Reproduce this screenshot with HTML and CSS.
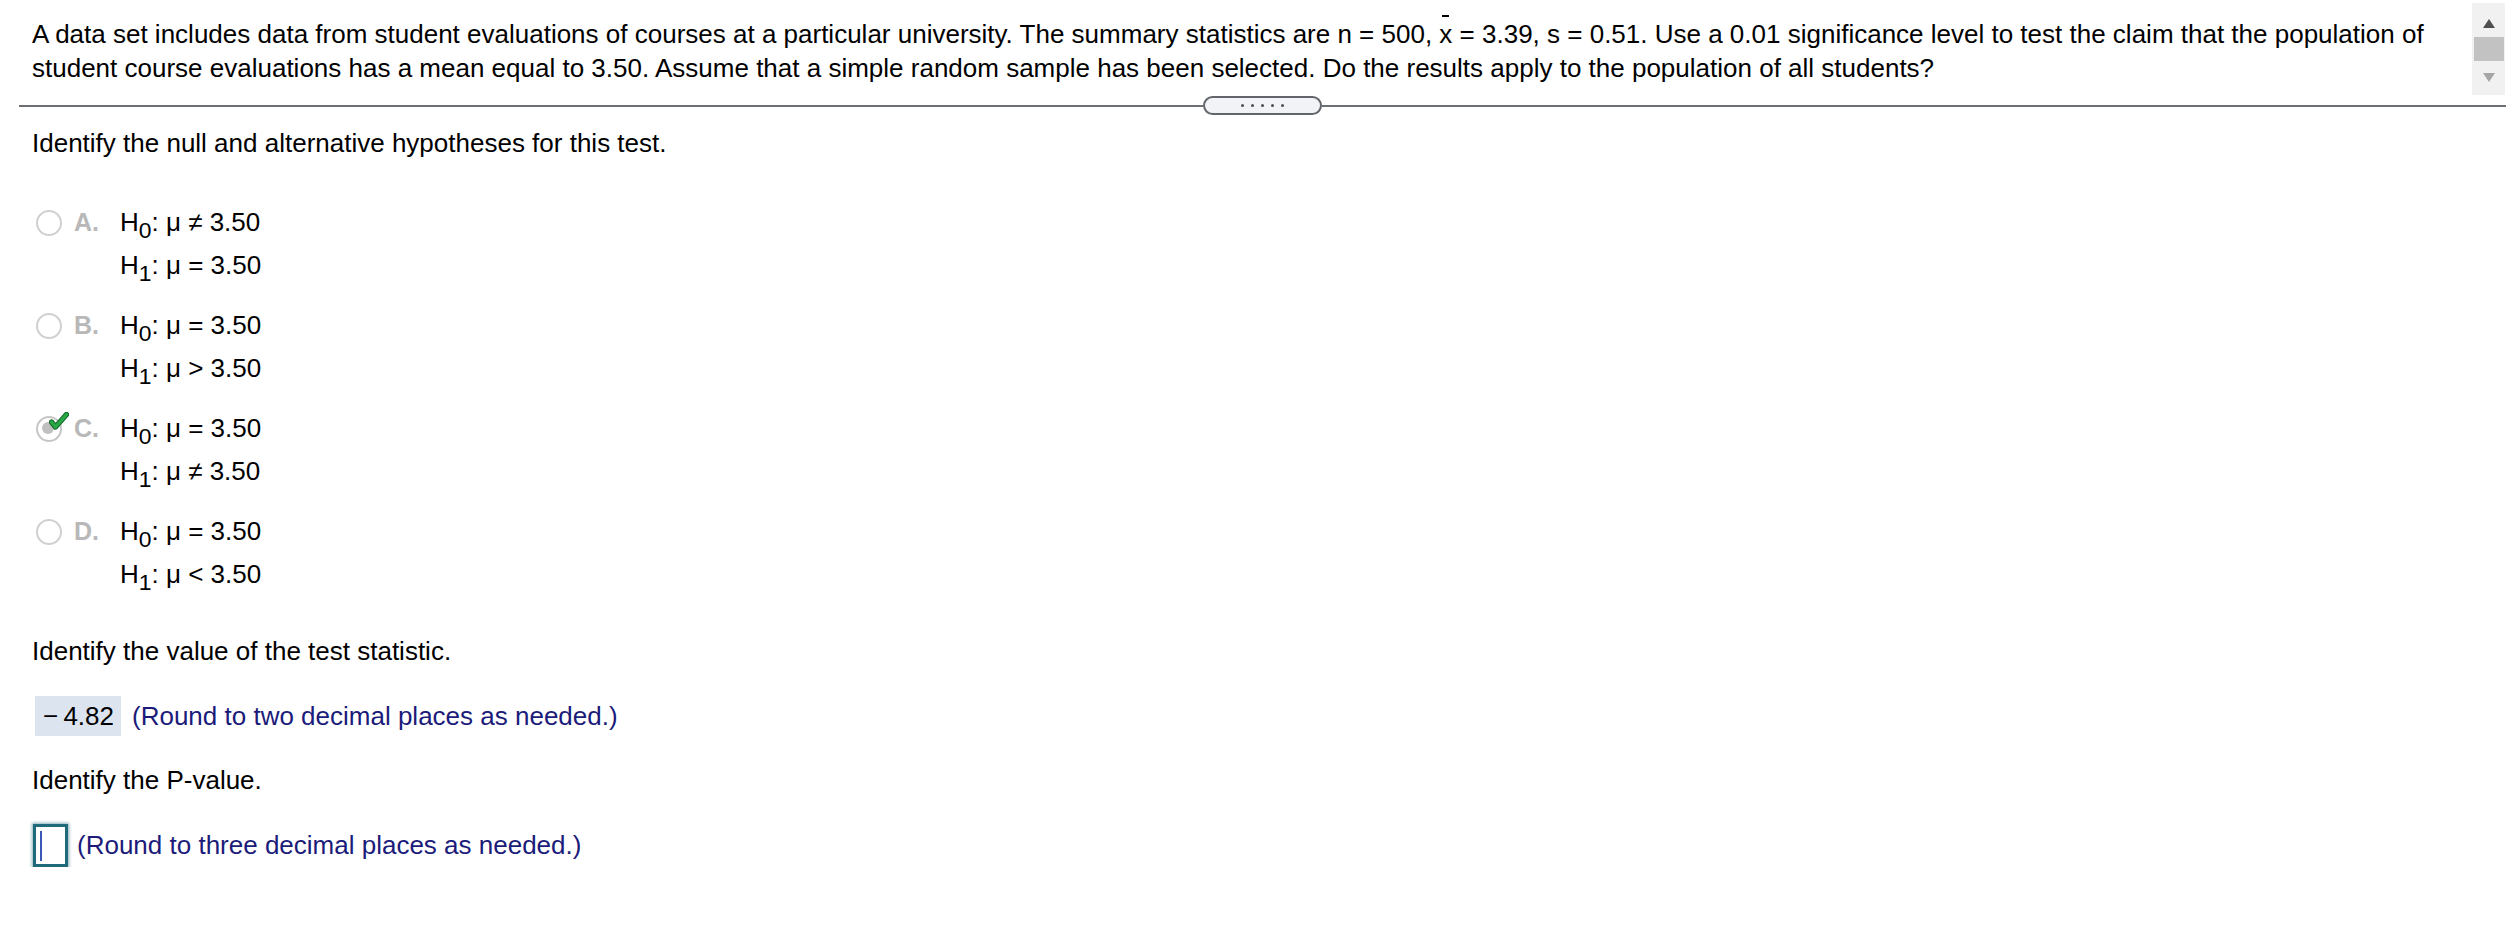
FILE: index.html
```html
<!DOCTYPE html>
<html lang="en">
<head>
<meta charset="utf-8">
<title>Hypothesis test</title>
<link rel="stylesheet" href="styles.css">
</head>
<body>
<div class="page">
  <header class="question">
    <p class="stem">A data set includes data from student evaluations of courses at a particular university. The summary statistics are n = 500, <span class="xbar">x</span> = 3.39, s = 0.51. Use a 0.01 significance level to test the claim that the population of student course evaluations has a mean equal to 3.50. Assume that a simple random sample has been selected. Do the results apply to the population of all students?</p>
    <div class="scrollbar">
      <span class="arrow arrow-up"></span>
      <span class="thumb"></span>
      <span class="arrow arrow-down"></span>
    </div>
  </header>

  <div class="divider">
    <span class="rule"></span>
    <button class="expander" type="button"><i></i><i></i><i></i><i></i><i></i></button>
    <span class="rule"></span>
  </div>

  <main class="work">
    <p class="prompt prompt-first">Identify the null and alternative hypotheses for this test.</p>

    <div class="options">
      <div class="option">
        <span class="radio"></span>
        <span class="label">A.</span>
        <div class="math">
          <div>H<sub>0</sub>: μ ≠ 3.50</div>
          <div>H<sub>1</sub>: μ = 3.50</div>
        </div>
      </div>
      <div class="option">
        <span class="radio"></span>
        <span class="label">B.</span>
        <div class="math">
          <div>H<sub>0</sub>: μ = 3.50</div>
          <div>H<sub>1</sub>: μ &gt; 3.50</div>
        </div>
      </div>
      <div class="option">
        <span class="radio radio-selected">
          <svg class="check" viewBox="0 0 20 18" width="20" height="18" aria-hidden="true">
            <path d="M2.5 10 L6.5 15 L17.5 2.5" fill="none" stroke="#11692a" stroke-width="5.4" stroke-linecap="round" stroke-linejoin="round"/>
            <path d="M2.5 10 L6.5 15 L17.5 2.5" fill="none" stroke="#2aa846" stroke-width="3.4" stroke-linecap="round" stroke-linejoin="round"/>
          </svg>
        </span>
        <span class="label">C.</span>
        <div class="math">
          <div>H<sub>0</sub>: μ = 3.50</div>
          <div>H<sub>1</sub>: μ ≠ 3.50</div>
        </div>
      </div>
      <div class="option">
        <span class="radio"></span>
        <span class="label">D.</span>
        <div class="math">
          <div>H<sub>0</sub>: μ = 3.50</div>
          <div>H<sub>1</sub>: μ &lt; 3.50</div>
        </div>
      </div>
    </div>

    <p class="prompt prompt-stat">Identify the value of the test statistic.</p>
    <div class="answer-row answer-stat">
      <span class="answer-value">−&#8201;4.82</span>
      <span class="hint">(Round to two decimal places as needed.)</span>
    </div>

    <p class="prompt prompt-p">Identify the P-value.</p>
    <div class="answer-row answer-p">
      <span class="answer-input"><span class="caret"></span></span>
      <span class="hint hint-input">(Round to three decimal places as needed.)</span>
    </div>
  </main>
</div>
</body>
</html>
```

FILE: styles.css
```css
* {
  box-sizing: border-box;
}

html, body {
  margin: 0;
  padding: 0;
  background: #ffffff;
}

body {
  font-family: "Liberation Sans", Arial, sans-serif;
  font-size: 26px;
  color: #000000;
}

.page {
  width: 2520px;
}

/* ---------- question header ---------- */
.question {
  display: flex;
  align-items: flex-start;
  height: 96px;
}

.stem {
  flex: 1;
  margin: 17px 32px 0 32px;
  line-height: 34px;
}

.xbar {
  position: relative;
}

.xbar::before {
  content: "";
  position: absolute;
  left: 3px;
  right: 3px;
  top: -4px;
  height: 2px;
  background: #000000;
}

.scrollbar {
  width: 33px;
  height: 92px;
  margin: 3px 15px 0 0;
  background: #f1f1f1;
  display: flex;
  flex-direction: column;
  align-items: center;
  padding-top: 16px;
  flex: none;
}

.arrow {
  width: 0;
  height: 0;
  border-left: 6px solid transparent;
  border-right: 6px solid transparent;
}

.arrow-up {
  border-bottom: 9px solid #4f4f4f;
}

.thumb {
  width: 30px;
  height: 24px;
  background: #c2c2c2;
  margin: 9px 0 12px;
}

.arrow-down {
  border-top: 9px solid #a6a6a6;
}

/* ---------- divider ---------- */
.divider {
  display: flex;
  align-items: center;
  height: 19px;
  margin: 0 14px 0 19px;
}

.rule {
  flex: 1;
  height: 2px;
  background: #6c6f74;
}

.expander {
  width: 119px;
  height: 19px;
  padding: 0;
  border: 2px solid #62666c;
  border-radius: 10px;
  background: #f1f3f6;
  display: flex;
  justify-content: center;
  align-items: center;
  gap: 7px;
}

.expander i {
  width: 3px;
  height: 3px;
  border-radius: 50%;
  background: #4a4d52;
}

/* ---------- work area ---------- */
.work {
  padding-left: 32px;
}

.prompt {
  margin: 0;
  line-height: 34px;
}

.prompt-first {
  margin-top: 11px;
}

.options {
  margin-top: 41px;
  display: flex;
  flex-direction: column;
  gap: 17px;
}

.option {
  display: flex;
  align-items: flex-start;
}

.radio {
  position: relative;
  width: 26px;
  height: 26px;
  margin: 8.5px 0 0 3.5px;
  border: 2.5px solid #d0d0d0;
  border-radius: 50%;
  background: #ffffff;
  flex: none;
}

.radio-selected {
  border-color: #c6c6c6;
}

.radio-selected::after {
  content: "";
  position: absolute;
  left: 4.5px;
  top: 4.5px;
  width: 12px;
  height: 12px;
  border-radius: 50%;
  background: #c0c0c0;
}

.check {
  position: absolute;
  left: 11px;
  top: -6px;
  z-index: 1;
}

.label {
  width: 46px;
  margin-left: 12.5px;
  font-weight: bold;
  font-size: 25px;
  line-height: 43px;
  color: #b8b8b8;
  flex: none;
}

.math {
  line-height: 43px;
  color: #000000;
}

.math sub {
  font-size: 0.88em;
  vertical-align: -0.32em;
  line-height: 0;
}

.prompt-stat {
  margin-top: 38px;
}

.answer-row {
  display: flex;
  align-items: center;
}

.answer-stat {
  margin-top: 28px;
  height: 40px;
}

.answer-value {
  height: 40px;
  margin-left: 3px;
  padding: 0 7px 0 8px;
  display: flex;
  align-items: center;
  background: #dce4ef;
  color: #000000;
}

.hint {
  margin-left: 11px;
  color: #1b1b7a;
}

.prompt-p {
  margin-top: 27px;
}

.answer-p {
  margin-top: 27px;
  height: 43px;
}

.answer-input {
  width: 35px;
  height: 43px;
  margin-left: 1px;
  border: 3px solid #1f6a7a;
  box-shadow: 0 0 3px 1px rgba(31, 106, 122, 0.55);
  background: #ffffff;
  display: flex;
  align-items: center;
  padding-left: 4px;
  flex: none;
}

.caret {
  width: 2px;
  height: 30px;
  background: #3a58b6;
}

.hint-input {
  margin-left: 9px;
}
```
